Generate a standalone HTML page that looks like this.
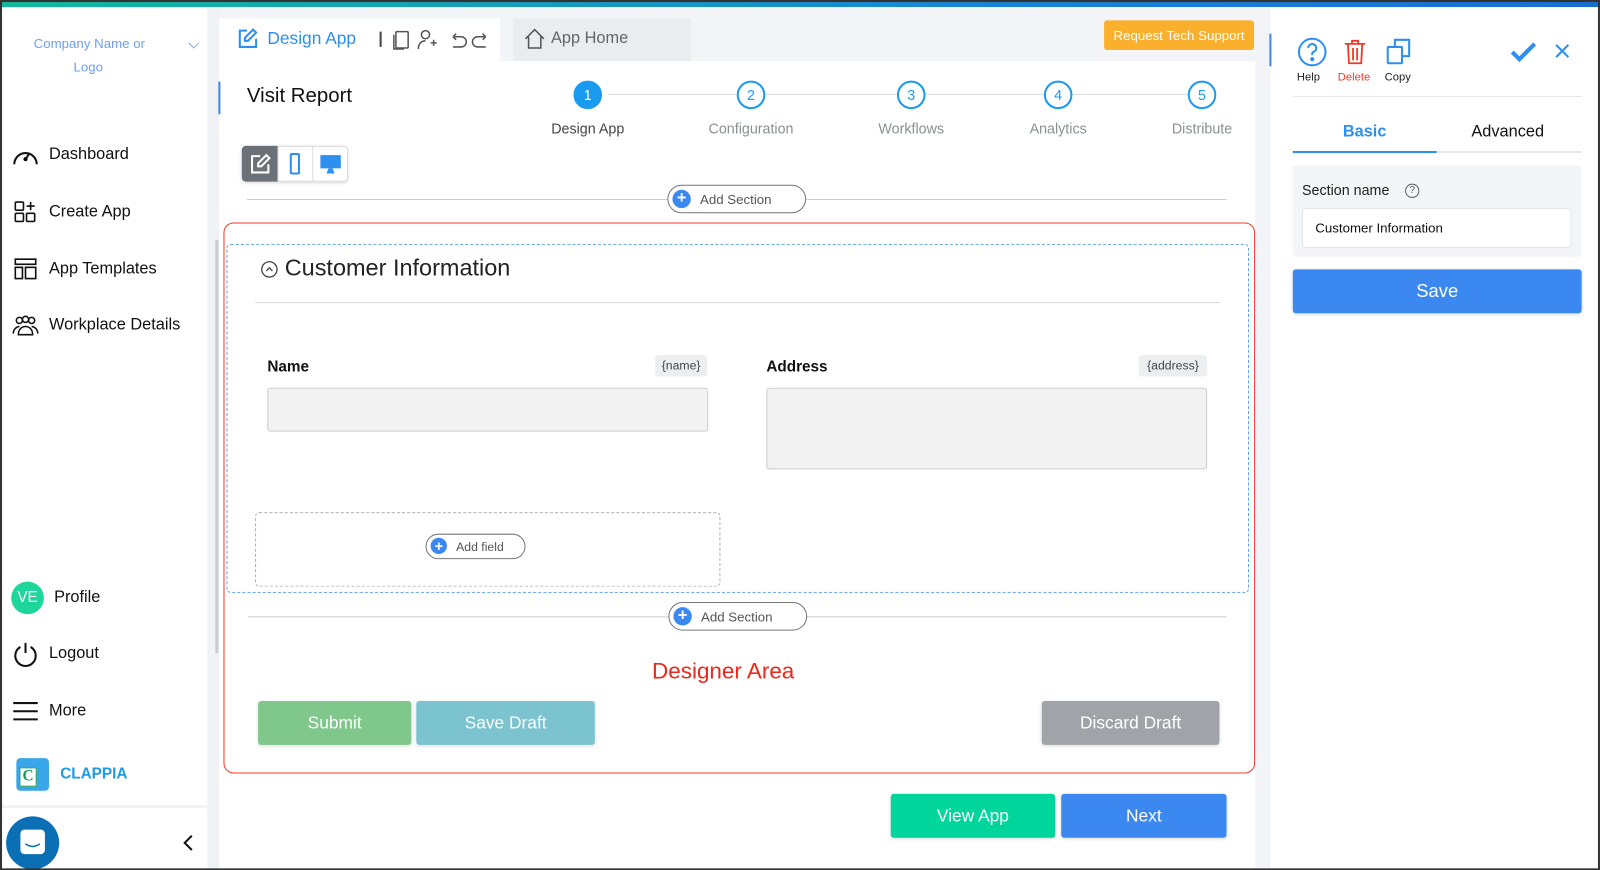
<!DOCTYPE html><html><head><meta charset="utf-8"><style>
*{box-sizing:border-box;margin:0;padding:0}
body{width:1600px;height:870px;overflow:hidden;background:#fff;font-family:"Liberation Sans",sans-serif;}
#w{width:1568px;height:853px;position:relative;transform:scale(1.0204);transform-origin:0 0;background:#fff;overflow:hidden}
.a{position:absolute}
.t{position:absolute;white-space:nowrap}
.step{position:absolute;width:28px;height:28px;border:2px solid #1a9bef;border-radius:50%;color:#1a9bef;font-size:14px;text-align:center;line-height:24px;background:#fff}
.sl{position:absolute;font-size:14px;color:#8a8f94;transform:translateX(-50%);white-space:nowrap}
.pill{position:absolute;border:1.5px solid #777;border-radius:15px;background:#fff;font-size:13px;color:#555}
.pl{position:absolute;width:18px;height:18px;border-radius:50%;background:#3b89f0;color:#fff;font-weight:bold;font-size:16px;line-height:18px;text-align:center}
.btn{position:absolute;color:#fff;font-size:17px;text-align:center;border-radius:3px;box-shadow:0 1px 3px rgba(0,0,0,.15)}
.nav{position:absolute;left:48px;font-size:16px;color:#111}
</style></head><body><div id="w">
<div class="a" style="left:0;top:0;width:1568px;height:7px;background:linear-gradient(90deg,#14b89a,#1a86d6 60%,#1a6fd0)"></div>
<div class="a" style="left:203px;top:7px;width:12px;height:850px;background:#f0f2f5"></div>
<div class="a" style="left:211px;top:235px;width:3px;height:405px;background:#c8cbcf"></div>
<div class="a" style="left:215px;top:7px;width:1030px;height:53px;background:#f2f4f7"></div>
<div class="a" style="left:1230px;top:7px;width:15px;height:850px;background:#f2f4f7"></div>
<div class="a" style="left:1245px;top:7px;width:325px;height:850px;background:#fff"></div>
<div class="a" style="left:1244px;top:33px;width:2px;height:32px;background:#3b89f0"></div>
<div class="t" style="left:33px;top:35px;font-size:13px;color:#6f9ef0">Company Name or</div>
<div class="t" style="left:72px;top:58px;font-size:13px;color:#6f9ef0">Logo</div>
<svg class="a" style="left:184px;top:41px" width="12" height="8"><path d="M1 1l5 5 5-5" stroke="#8aa8e0" fill="none"/></svg>
<svg class="a" style="left:10px;top:139px" width="30" height="28"><path d="M4 22A11 11 0 1 1 26 22" stroke="#111" stroke-width="2" fill="none"/><path d="M15 17l4-6" stroke="#111" stroke-width="2"/><circle cx="15" cy="17" r="2"/></svg>
<div class="nav" style="top:143px">Dashboard</div>
<svg class="a" style="left:13px;top:196px" width="24" height="24" fill="none" stroke="#111" stroke-width="1.6"><rect x="2" y="2" width="8" height="8" rx="1"/><rect x="2" y="13" width="8" height="8" rx="1"/><rect x="13" y="13" width="8" height="8" rx="1"/><path d="M17 2v8M13 6h8"/></svg>
<div class="nav" style="top:199px">Create App</div>
<svg class="a" style="left:13px;top:252px" width="24" height="24" fill="none" stroke="#111" stroke-width="1.6"><rect x="2" y="2" width="20" height="5"/><rect x="2" y="10" width="7" height="11"/><rect x="12" y="10" width="10" height="11"/></svg>
<div class="nav" style="top:255px">App Templates</div>
<svg class="a" style="left:11px;top:308px" width="28" height="22" fill="none" stroke="#111" stroke-width="1.5"><circle cx="8" cy="6" r="3"/><circle cx="14" cy="5" r="3"/><circle cx="20" cy="6" r="3"/><path d="M2 19c0-5 4-7 6-7M26 19c0-5-4-7-6-7M7 20c0-6 4-8 7-8s7 2 7 8z"/></svg>
<div class="nav" style="top:310px">Workplace Details</div>
<div class="a" style="left:11px;top:570px;width:32px;height:32px;border-radius:50%;background:#1ed69a;color:#fff;font-size:15px;text-align:center;line-height:32px">VE</div>
<div class="nav" style="left:53px;top:577px">Profile</div>
<svg class="a" style="left:12px;top:628px" width="26" height="26" fill="none" stroke="#111" stroke-width="2"><path d="M8 6A10 10 0 1 0 18 6M13 2v10"/></svg>
<div class="nav" style="top:632px">Logout</div>
<svg class="a" style="left:12px;top:687px" width="26" height="20" stroke="#111" stroke-width="2"><path d="M1 2h24M1 10h24M1 18h24"/></svg>
<div class="nav" style="top:688px">More</div>
<div class="a" style="left:16px;top:743px;width:32px;height:32px;border-radius:4px;background:#38a6e8"></div>
<div class="a" style="left:19px;top:752px;width:17px;height:19px;background:#fff;border:1px solid #1a9b5a;color:#1a9b5a;font:bold 15px 'Liberation Serif',serif;text-align:center;line-height:17px">C</div>
<div class="t" style="left:59px;top:750px;font-size:15px;font-weight:bold;color:#1d9be6">CLAPPIA</div>
<div class="a" style="left:2px;top:789px;width:201px;height:3px;background:#f0f2f5"></div>
<div class="a" style="left:6px;top:800px;width:52px;height:52px;border-radius:50%;background:#0a6fb5"></div>
<div class="a" style="left:20px;top:813px;width:24px;height:24px;border-radius:4px;background:#fff"></div>
<svg class="a" style="left:24px;top:826px" width="16" height="6"><path d="M1 1q7 5 14 0" stroke="#0a6fb5" stroke-width="1.5" fill="none"/></svg>
<svg class="a" style="left:178px;top:817px" width="12" height="18"><path d="M10 2L3 9l7 7" stroke="#111" stroke-width="2" fill="none"/></svg>
<div class="a" style="left:215px;top:18px;width:275px;height:42px;background:#fff"></div>
<svg class="a" style="left:231px;top:27px" width="22" height="22" fill="none" stroke="#2d8ff0" stroke-width="2"><path d="M11 3H4v16h16v-8"/><path d="M17 2l3 3-8 8H9v-3z"/></svg>
<div class="t" style="left:262px;top:28px;font-size:17px;color:#2d8ff0">Design App</div>
<div class="a" style="left:372px;top:31px;width:2px;height:15px;background:#444"></div>
<svg class="a" style="left:384px;top:28px" width="100" height="22" fill="none" stroke="#555" stroke-width="1.5"><rect x="4" y="3" width="12" height="16" rx="1"/><path d="M2 6v14h10"/><circle cx="33" cy="6" r="4"/><path d="M26 20c0-6 4-8 7-8M38 14h6M41 11v6"/><path d="M60 8h8a5 5 0 0 1 0 10h-8M60 8l3-3M60 8l3 3"/><path d="M92 8h-8a5 5 0 0 0 0 10h8M92 8l-3-3M92 8l-3 3"/></svg>
<div class="a" style="left:503px;top:18px;width:174px;height:42px;background:#eaecef"></div>
<svg class="a" style="left:513px;top:27px" width="22" height="22" fill="none" stroke="#555" stroke-width="1.5"><path d="M2 11L11 2l9 9M5 9v11h12V9"/></svg>
<div class="t" style="left:540px;top:29px;font-size:16px;color:#666">App Home</div>
<div class="a" style="left:1082px;top:20px;width:147px;height:29px;background:#fbb02d;border-radius:3px;color:#fff;font-size:13px;text-align:center;line-height:29px">Request Tech Support</div>
<div class="a" style="left:215px;top:60px;width:1015px;height:800px;background:#fff"></div>
<div class="a" style="left:214px;top:80px;width:2px;height:32px;background:#3b89f0"></div>
<div class="t" style="left:242px;top:83px;font-size:20px;color:#111">Visit Report</div>
<div class="a" style="left:596px;top:92px;width:580px;height:1px;background:#ddd"></div>
<div class="step" style="left:562px;top:79px;background:#1a9bef;color:#fff">1</div>
<div class="step" style="left:722px;top:79px">2</div>
<div class="step" style="left:879px;top:79px">3</div>
<div class="step" style="left:1023px;top:79px">4</div>
<div class="step" style="left:1164px;top:79px">5</div>
<div class="sl" style="left:576px;top:118px;color:#444">Design App</div>
<div class="sl" style="left:736px;top:118px">Configuration</div>
<div class="sl" style="left:893px;top:118px">Workflows</div>
<div class="sl" style="left:1037px;top:118px">Analytics</div>
<div class="sl" style="left:1178px;top:118px">Distribute</div>
<div class="a" style="left:237px;top:143px;width:104px;height:35px;border:1px solid #ddd;border-radius:4px;box-shadow:0 1px 3px rgba(0,0,0,.15);background:#fff"></div>
<div class="a" style="left:237px;top:143px;width:35px;height:35px;background:#6c7178;border-radius:4px 0 0 4px"></div>
<svg class="a" style="left:244px;top:150px" width="22" height="22" fill="none" stroke="#fff" stroke-width="2"><path d="M11 3H3v16h16v-8"/><path d="M17 2l3 3-8 8H9v-3z"/></svg>
<div class="a" style="left:272px;top:143px;width:1px;height:35px;background:#ddd"></div>
<div class="a" style="left:306px;top:143px;width:1px;height:35px;background:#ddd"></div>
<div class="a" style="left:284px;top:150px;width:10px;height:21px;border:2px solid #2d8ff0;border-radius:2px"></div>
<svg class="a" style="left:313px;top:151px" width="22" height="20"><rect x="1" y="1" width="20" height="13" fill="#2d8ff0"/><path d="M7 19h8l-2-5h-4z" fill="#2d8ff0"/></svg>
<div class="a" style="left:242px;top:195px;width:960px;height:1px;background:#ccc"></div>
<div class="pill" style="left:654px;top:181px;width:136px;height:28px"><div class="pl" style="left:4px;top:4px">+</div><span class="t" style="left:31px;top:6px">Add Section</span></div>
<div class="a" style="left:219px;top:218px;width:1011px;height:540px;border:1.5px solid #f03a2a;border-radius:10px"></div>
<div class="a" style="left:222px;top:239px;width:1002px;height:342px;border:1px dashed #5aa0f0;border-radius:4px"></div>
<svg class="a" style="left:255px;top:255px" width="18" height="18" fill="none" stroke="#444" stroke-width="1.3"><circle cx="9" cy="9" r="7.5"/><path d="M6 10.5l3-3 3 3"/></svg>
<div class="t" style="left:279px;top:249px;font-size:23px;color:#222">Customer Information</div>
<div class="a" style="left:250px;top:296px;width:946px;height:1px;background:#ddd"></div>
<div class="t" style="left:262px;top:351px;font-size:15px;font-weight:bold;color:#111">Name</div>
<div class="a" style="left:642px;top:348px;width:51px;height:21px;background:#eceef0;border-radius:3px;font-size:12px;color:#444;text-align:center;line-height:21px">{name}</div>
<div class="a" style="left:262px;top:380px;width:432px;height:43px;background:#f2f2f2;border:1px solid #ccc;border-radius:3px"></div>
<div class="t" style="left:751px;top:351px;font-size:15px;font-weight:bold;color:#111">Address</div>
<div class="a" style="left:1116px;top:348px;width:67px;height:21px;background:#eceef0;border-radius:3px;font-size:12px;color:#444;text-align:center;line-height:21px">{address}</div>
<div class="a" style="left:751px;top:380px;width:432px;height:80px;background:#f2f2f2;border:1px solid #ccc;border-radius:3px"></div>
<div class="a" style="left:250px;top:502px;width:456px;height:73px;border:1px dashed #aaa;border-radius:4px"></div>
<div class="pill" style="left:417px;top:523px;width:98px;height:25px"><div class="pl" style="left:4px;top:3px;width:16px;height:16px;line-height:16px;font-size:14px">+</div><span class="t" style="left:29px;top:5px;font-size:12px">Add field</span></div>
<div class="a" style="left:243px;top:604px;width:959px;height:1px;background:#ccc"></div>
<div class="pill" style="left:655px;top:590px;width:136px;height:28px"><div class="pl" style="left:4px;top:4px">+</div><span class="t" style="left:31px;top:6px">Add Section</span></div>
<div class="t" style="left:639px;top:645px;font-size:22px;color:#f0261a">Designer Area</div>
<div class="btn" style="left:253px;top:687px;width:150px;height:43px;line-height:43px;background:#7fc78a">Submit</div>
<div class="btn" style="left:408px;top:687px;width:175px;height:43px;line-height:43px;background:#7bc3cf">Save Draft</div>
<div class="btn" style="left:1021px;top:687px;width:174px;height:43px;line-height:43px;background:#a0a4a8">Discard Draft</div>
<div class="btn" style="left:873px;top:778px;width:161px;height:43px;line-height:43px;background:#00d69b">View App</div>
<div class="btn" style="left:1040px;top:778px;width:162px;height:43px;line-height:43px;background:#3b89f0">Next</div>
<svg class="a" style="left:1271px;top:36px" width="30" height="30" fill="none" stroke="#2d8ff0" stroke-width="2"><circle cx="15" cy="15" r="13"/><path d="M11 11a4 4 0 1 1 5 4c-1 .5-1 1-1 3"/><circle cx="15" cy="22" r="1" fill="#2d8ff0"/></svg>
<svg class="a" style="left:1316px;top:38px" width="24" height="26" fill="none" stroke="#f03a2a" stroke-width="1.8"><path d="M2 5h20M9 5V2h6v3M5 5l1 19h12l1-19M10 9v12M14 9v12"/></svg>
<svg class="a" style="left:1358px;top:37px" width="26" height="28" fill="none" stroke="#2d8ff0" stroke-width="2"><rect x="2" y="9" width="14" height="16" rx="1"/><path d="M9 9V2h14v16h-7"/></svg>
<div class="t" style="left:1271px;top:70px;font-size:11px;color:#222">Help</div>
<div class="t" style="left:1311px;top:70px;font-size:11px;color:#f03a2a">Delete</div>
<div class="t" style="left:1357px;top:70px;font-size:11px;color:#222">Copy</div>
<svg class="a" style="left:1479px;top:40px" width="28" height="22"><path d="M3 11l7 7L25 3" stroke="#2d8ff0" stroke-width="4" fill="none"/></svg>
<svg class="a" style="left:1523px;top:42px" width="16" height="16"><path d="M2 2l12 12M14 2L2 14" stroke="#2d8ff0" stroke-width="2"/></svg>
<div class="a" style="left:1267px;top:94px;width:283px;height:1px;background:#e3e5e8"></div>
<div class="t" style="left:1316px;top:121px;font-size:16px;font-weight:bold;color:#2d8ff0">Basic</div>
<div class="t" style="left:1442px;top:121px;font-size:16px;color:#111">Advanced</div>
<div class="a" style="left:1267px;top:148px;width:283px;height:2px;background:#e6e8ea"></div>
<div class="a" style="left:1267px;top:148px;width:141px;height:2px;background:#2d8ff0"></div>
<div class="a" style="left:1267px;top:162px;width:283px;height:90px;background:#f4f5f8;border-radius:4px"></div>
<div class="t" style="left:1276px;top:178px;font-size:14px;color:#222">Section name</div>
<div class="a" style="left:1377px;top:180px;width:14px;height:14px;border:1px solid #666;border-radius:50%;font-size:10px;color:#666;text-align:center;line-height:12px">?</div>
<div class="a" style="left:1276px;top:204px;width:264px;height:39px;background:#fff;border:1px solid #e3e5e8;border-radius:3px"></div>
<div class="t" style="left:1289px;top:216px;font-size:13px;color:#111">Customer Information</div>
<div class="btn" style="left:1267px;top:264px;width:283px;height:43px;line-height:43px;background:#3b89f0;font-size:18px">Save</div>
<div class="a" style="left:0;top:0;width:1568px;height:853px;border:2px solid #333;pointer-events:none"></div>
</div></body></html>
